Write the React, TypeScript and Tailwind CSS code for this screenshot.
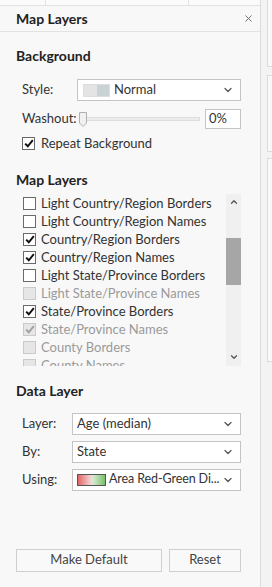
import { ChevronDown, ChevronUp, X } from 'lucide-react'

const layers = [
  { name: 'Light Country/Region Borders', checked: false, disabled: false },
  { name: 'Light Country/Region Names', checked: false, disabled: false },
  { name: 'Country/Region Borders', checked: true, disabled: false },
  { name: 'Country/Region Names', checked: true, disabled: false },
  { name: 'Light State/Province Borders', checked: false, disabled: false },
  { name: 'Light State/Province Names', checked: false, disabled: true },
  { name: 'State/Province Borders', checked: true, disabled: false },
  { name: 'State/Province Names', checked: true, disabled: true },
  { name: 'County Borders', checked: false, disabled: true },
  { name: 'County Names', checked: false, disabled: true },
]

function Check({ checked, disabled }: { checked: boolean; disabled?: boolean }) {
  return (
    <span
      className={
        'inline-flex h-[13px] w-[13px] shrink-0 items-center justify-center border ' +
        (disabled ? 'border-[#cacaca] bg-[#e6e6e6]' : 'border-[#6a6a6a] bg-white')
      }
    >
      {checked && (
        <svg width="10" height="9" viewBox="0 0 10 9">
          <path
            d="M1.2 4.6 L3.8 7.3 L8.8 1.2"
            fill="none"
            stroke={disabled ? '#a0a0a0' : '#111'}
            strokeWidth="2"
          />
        </svg>
      )}
    </span>
  )
}

function Select({ children, className }: { children: React.ReactNode; className?: string }) {
  return (
    <div
      className={
        'flex h-[22px] min-w-0 items-center justify-between border border-[#c4c4c4] bg-white pl-[4px] pr-[6px] ' +
        (className ?? '')
      }
    >
      <div className="flex min-w-0 items-center gap-[4px] overflow-hidden whitespace-nowrap">{children}</div>
      <ChevronDown className="h-[12px] w-[12px] shrink-0 text-[#555]" strokeWidth={2.5} />
    </div>
  )
}

export default function App() {
  return (
    <div
      className="flex h-[587px] w-[272px] overflow-hidden bg-[#f3f3f3] text-[13px] text-[#333]"
      style={{ fontFamily: 'Lato, "Open Sans", sans-serif' }}
    >
      <div className="flex w-[261px] shrink-0 flex-col border-r border-[#dcdcdc]">
        <div className="relative h-[6px] shrink-0 border-b border-[#e2e2e2] bg-[#fbfbfb]">
          <div className="absolute left-[45px] top-0 h-full w-px bg-[#e2e2e2]" />
          <div className="absolute left-[188px] top-0 h-full w-px bg-[#e2e2e2]" />
        </div>
        <div className="flex flex-1 flex-col bg-[#f8f8f8]">
          <div className="flex h-[26px] items-center justify-between border-b border-[#e2e2e2] pl-[16px] pr-[6px]">
            <span className="text-[14px] font-bold text-[#222]">Map Layers</span>
            <X className="h-[11px] w-[11px] text-[#666]" strokeWidth={2} />
          </div>

          <div className="flex flex-col pl-[16px] pr-[19px]">
            <div className="pt-[13px] text-[14px] font-bold text-[#222]">Background</div>

            <div className="mt-[13px] flex items-center">
              <span className="w-[61px] shrink-0 pl-[6px]">Style:</span>
              <Select className="flex-1 pl-[5px]">
                <span className="flex h-[13px] w-[27px] shrink-0 border border-[#ddd]">
                  <span className="w-1/2 bg-[#e4e4e4]" />
                  <span className="w-1/2 bg-[#c9d3d3]" />
                </span>
                <span>Normal</span>
              </Select>
            </div>

            <div className="mt-[8px] flex items-center">
              <span className="shrink-0 pl-[6px]">Washout:</span>
              <div className="relative ml-[2px] flex h-[15px] w-[121px] items-center">
                <div className="ml-[6px] h-[4px] flex-1 border border-[#dedede] bg-[#ececec]" />
                <svg className="absolute left-0 top-0" width="8" height="15" viewBox="0 0 8 15">
                  <path d="M0.5 0.5 H7.5 V11 L4 14.5 L0.5 11 Z" fill="#f1f1f1" stroke="#b0b0b0" />
                </svg>
              </div>
              <div className="ml-auto flex h-[20px] w-[36px] items-center border border-[#c4c4c4] bg-white pl-[3px] text-[13px]">
                0%
              </div>
            </div>

            <div className="mt-[5px] flex items-center gap-[6px] pl-[6px]">
              <Check checked />
              <span>Repeat Background</span>
            </div>

            <div className="pt-[15px] text-[14px] font-bold text-[#222]">Map Layers</div>

            <div className="mt-[4px] flex h-[172px]">
              <div className="flex flex-1 flex-col overflow-hidden pl-[7px] pt-[1px]">
                {layers.map((l) => (
                  <div key={l.name} className="flex h-[18px] shrink-0 items-center gap-[5px]">
                    <Check checked={l.checked} disabled={l.disabled} />
                    <span className={'whitespace-nowrap ' + (l.disabled ? 'text-[#9a9a9a]' : '')}>
                      {l.name}
                    </span>
                  </div>
                ))}
              </div>
              <div className="flex w-[15px] shrink-0 flex-col bg-[#f0f0f0]">
                <div className="flex h-[17px] items-center justify-center">
                  <ChevronUp className="h-[10px] w-[10px] text-[#555]" strokeWidth={3} />
                </div>
                <div className="mt-[27px] h-[47px] bg-[#a6a6a6]" />
                <div className="flex-1" />
                <div className="flex h-[17px] items-center justify-center">
                  <ChevronDown className="h-[10px] w-[10px] text-[#555]" strokeWidth={3} />
                </div>
              </div>
            </div>

            <div className="pt-[14px] text-[14px] font-bold text-[#222]">Data Layer</div>

            <div className="mt-[12px] flex flex-col gap-[6px]">
              <div className="flex items-center">
                <span className="w-[56px] shrink-0 pl-[6px]">Layer:</span>
                <Select className="flex-1">
                  <span>Age (median)</span>
                </Select>
              </div>
              <div className="flex items-center">
                <span className="w-[56px] shrink-0 pl-[6px]">By:</span>
                <Select className="flex-1">
                  <span>State</span>
                </Select>
              </div>
              <div className="flex items-center">
                <span className="w-[56px] shrink-0 pl-[6px]">Using:</span>
                <Select className="flex-1 pr-[5px]">
                  <span className="h-[12px] w-[29px] shrink-0 border border-[#555] bg-[linear-gradient(to_right,#e06666,#f2d0d0_45%,#d8ead2_55%,#79c06a)]" />
                  <span className="-ml-[1px] text-[12.5px] tracking-[-0.1px]">Area Red-Green Di...</span>
                </Select>
              </div>
            </div>

            <div className="mt-[58px] flex gap-[7px]">
              <button className="h-[23px] w-[146px] border border-[#cfcfcf] bg-[#f9f9f9] text-[13px] text-[#444]">
                Make Default
              </button>
              <button className="h-[23px] flex-1 border border-[#cfcfcf] bg-[#f9f9f9] text-[13px] text-[#444]">
                Reset
              </button>
            </div>
          </div>
        </div>
      </div>

      <div className="flex flex-1 flex-col pl-[6px]">
        <div className="h-[67px] border-b border-l border-[#dcdcdc] bg-[#f8f8f8]" />
        <div className="mt-[8px] h-[77px] border-y border-l border-[#dcdcdc] bg-[#f8f8f8]" />
        <div className="mt-[6px] h-[204px] border-y border-l border-[#dcdcdc] bg-[#f8f8f8]" />
      </div>
    </div>
  )
}
